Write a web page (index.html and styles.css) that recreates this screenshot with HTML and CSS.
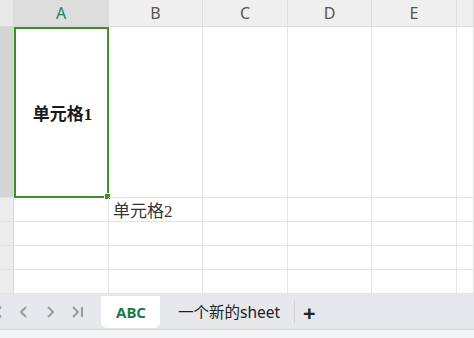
FILE: index.html
```html
<!DOCTYPE html>
<html lang="zh">
<head>
    <meta charset="UTF-8">
    <title>Sheet</title>
    <link rel="stylesheet" href="styles.css">
</head>
<body>
    <div class="sheet">
        <div class="corner"></div>
        <div class="col-head active">A</div>
        <div class="col-head">B</div>
        <div class="col-head">C</div>
        <div class="col-head">D</div>
        <div class="col-head">E</div>
        <div class="col-head"></div>

        <div class="row-head active"></div>
        <div class="cell selected"><span class="bold-text">单元格1</span><span class="handle"></span></div>
        <div class="cell"></div>
        <div class="cell"></div>
        <div class="cell"></div>
        <div class="cell"></div>
        <div class="cell"></div>

        <div class="row-head"></div>
        <div class="cell"></div>
        <div class="cell text">单元格2</div>
        <div class="cell"></div>
        <div class="cell"></div>
        <div class="cell"></div>
        <div class="cell"></div>

        <div class="row-head"></div>
        <div class="cell"></div>
        <div class="cell"></div>
        <div class="cell"></div>
        <div class="cell"></div>
        <div class="cell"></div>
        <div class="cell"></div>

        <div class="row-head"></div>
        <div class="cell"></div>
        <div class="cell"></div>
        <div class="cell"></div>
        <div class="cell"></div>
        <div class="cell"></div>
        <div class="cell"></div>

        <div class="row-head"></div>
        <div class="cell"></div>
        <div class="cell"></div>
        <div class="cell"></div>
        <div class="cell"></div>
        <div class="cell"></div>
        <div class="cell"></div>
    </div>

    <div class="tabbar">
        <div class="nav">
            <svg class="nav-icon cut" width="10" height="14" viewBox="0 0 10 14"><path d="M7 2 L2 7 L7 12" fill="none" stroke="#9a9a9a" stroke-width="2"/></svg>
            <svg class="nav-icon" width="10" height="14" viewBox="0 0 10 14"><path d="M7 2 L2 7 L7 12" fill="none" stroke="#9a9a9a" stroke-width="2"/></svg>
            <svg class="nav-icon" width="10" height="14" viewBox="0 0 10 14"><path d="M3 2 L8 7 L3 12" fill="none" stroke="#9a9a9a" stroke-width="2"/></svg>
            <svg class="nav-icon" width="14" height="14" viewBox="0 0 14 14"><path d="M2 2 L7 7 L2 12" fill="none" stroke="#9a9a9a" stroke-width="2"/><path d="M11 2 V12" stroke="#9a9a9a" stroke-width="2"/></svg>
        </div>
        <div class="tab current">ABC</div>
        <div class="tab">一个新的sheet</div>
        <div class="add">+</div>
    </div>
    <div class="statusbar"></div>
</body>
</html>
```

FILE: styles.css
```css
body {
    margin: 0;
    width: 474px;
    height: 338px;
    overflow: hidden;
    background-color: #ffffff;
    font-family: "Noto Sans", "Noto Sans CJK SC", sans-serif;
}

.sheet {
    display: grid;
    grid-template-columns: 14px 95px 94px 85px 84px 85px 1fr;
    grid-template-rows: 27px 171px 24px 24px 24px 24px;
}

.sheet > div {
    box-sizing: border-box;
}

.corner {
    background-color: #e9e9e9;
    border-right: 1px solid #dcdcdc;
    border-bottom: 1px solid #d8d8d8;
}

.col-head {
    background-color: #efefef;
    border-right: 1px solid #dedede;
    border-bottom: 1px solid #d8d8d8;
    color: #555555;
    font-size: 16px;
    display: flex;
    align-items: center;
    justify-content: center;
}

.col-head.active {
    background-color: #dddddd;
    color: #258060;
}

.row-head {
    background-color: #ececec;
    border-right: 1px solid #dcdcdc;
    border-bottom: 1px solid #e2e2e2;
}

.row-head.active {
    background-color: #d4d4d4;
}

.cell {
    border-right: 1px solid #e4e4e4;
    border-bottom: 1px solid #e4e4e4;
    position: relative;
}

.cell.selected {
    border: 2px solid #3f8d2b;
    display: flex;
    align-items: center;
    justify-content: center;
}

.bold-text {
    font-family: "Liberation Serif", "Noto Sans CJK SC", serif;
    font-weight: bold;
    font-size: 17px;
    color: #1a1a1a;
    margin-left: 2px;
}

.handle {
    position: absolute;
    right: -4px;
    bottom: -4px;
    width: 5px;
    height: 5px;
    background-color: #3f8d2b;
    border: 1px solid #ffffff;
}

.text {
    font-family: "Liberation Serif", "Noto Sans CJK SC", serif;
    font-size: 17px;
    color: #333333;
    padding: 3px 0 0 4px;
    line-height: 22px;
}

.tabbar {
    height: 36px;
    box-sizing: border-box;
    background-color: #e6e8eb;
    border-bottom: 1px solid #d6d8dc;
    display: flex;
    align-items: stretch;
}

.nav {
    display: flex;
    align-items: center;
    gap: 16px;
    margin-left: -6px;
    width: 107px;
}

.nav-icon.cut {
    margin-right: -1px;
}

.tab {
    display: flex;
    align-items: center;
    font-size: 15.5px;
    color: #222222;
    padding: 0 14px 0 18px;
    margin-bottom: 1px;
}

.tab.current {
    background-color: #ffffff;
    color: #1b7a45;
    font-weight: bold;
    font-size: 15px;
    padding: 0 14px 0 15px;
    margin-top: 2px;
    border-radius: 0 0 6px 6px;
}

.tab + .tab {
    border-right: 1px solid #cfd1d5;
    margin-top: 6px;
    margin-bottom: 6px;
}

.add {
    display: flex;
    align-items: center;
    padding-left: 8px;
    font-size: 22px;
    font-weight: bold;
    color: #222222;
}

.statusbar {
    height: 8px;
    background-color: #f3f4f6;
}
```
